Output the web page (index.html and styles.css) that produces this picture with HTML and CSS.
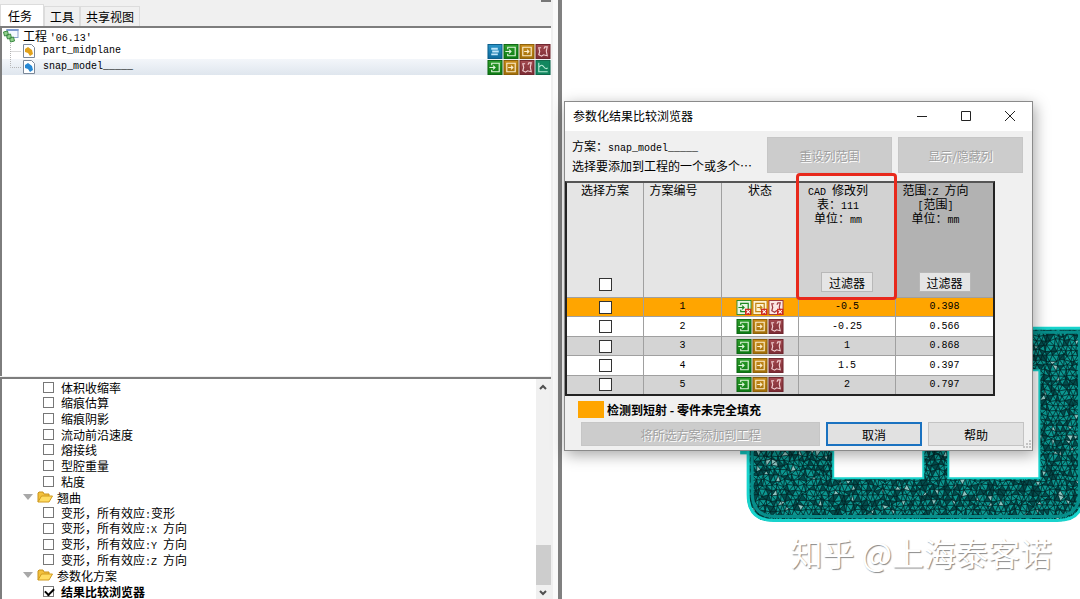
FILE: index.html
```html
<!DOCTYPE html>
<html lang="zh-CN">
<head>
    <meta charset="UTF-8">
    <meta name="viewport" content="width=device-width, initial-scale=1.0">
    <title>参数化结果比较浏览器</title>
    <link rel="stylesheet" href="styles.css">
</head>
<body>
    <!-- 图标定义 -->
    <svg class="defs" aria-hidden="true">
        <defs>
            <linearGradient id="gGreen" x2="0" y2="1"><stop offset="0" stop-color="#2f9e2c"/><stop offset="1" stop-color="#0c7a12"/></linearGradient>
            <linearGradient id="gGold" x2="0" y2="1"><stop offset="0" stop-color="#c98d1c"/><stop offset="1" stop-color="#a06e08"/></linearGradient>
            <linearGradient id="gRed" x2="0" y2="1"><stop offset="0" stop-color="#a34a50"/><stop offset="1" stop-color="#7c2c34"/></linearGradient>
            <linearGradient id="gBlue" x2="0" y2="1"><stop offset="0" stop-color="#2b95c8"/><stop offset="1" stop-color="#0b6a9c"/></linearGradient>
        </defs>
        <symbol id="fill" viewBox="0 0 16 16">
            <rect x=".5" y=".5" width="15" height="15" fill="url(#gGreen)" stroke="#0a6410"/>
            <path d="M4.500 5.500V3.500h8v9h-8v-2M2 8h6M6 6l2 2-2 2" fill="none" stroke="#dff5dc" stroke-width="1.200"/>
        </symbol>
        <symbol id="pack" viewBox="0 0 16 16">
            <rect x=".5" y=".5" width="15" height="15" fill="url(#gGold)" stroke="#8a5c05"/>
            <path d="M3.500 3.500h9v9h-9zM5 8h5M8 6l2 2-2 2" fill="none" stroke="#fdeecb" stroke-width="1.200"/>
        </symbol>
        <symbol id="warp" viewBox="0 0 16 16">
            <rect x=".5" y=".5" width="15" height="15" fill="url(#gRed)" stroke="#6d222b"/>
            <path d="M6 4H3.500l1 4-1 3.500 3 1.500 2-1.500 4 1-1-5 1-4.500H10L9 5" fill="none" stroke="#f1cfd2" stroke-width="1.200"/>
        </symbol>
        <symbol id="mesh" viewBox="0 0 16 16">
            <rect x=".5" y=".5" width="15" height="15" fill="url(#gBlue)" stroke="#075a86"/>
            <path d="M4 4h7v2H4zM5 7h7v2H5zM4 10h7v2H4z" fill="#bfe6fa"/>
        </symbol>
        <symbol id="curve" viewBox="0 0 16 16">
            <rect x=".5" y=".5" width="15" height="15" fill="#12875f" stroke="#0a6647"/>
            <path d="M3.500 3v9.500H13M4 7.500c2-3 3.500-2 5 0s3 2 4 1" fill="none" stroke="#b6ead5" stroke-width="1.200"/>
        </symbol>
        <symbol id="err" viewBox="0 0 8 8">
            <rect width="8" height="8" fill="#cf2a20"/>
            <path d="M2 2l4 4M6 2L2 6" stroke="#fff" stroke-width="1.300"/>
        </symbol>
        <symbol id="fillErr" viewBox="0 0 16 16">
            <rect x=".5" y=".5" width="15" height="15" fill="#e9f7e4" stroke="#2b8a2b"/>
            <path d="M4.500 5.500V3.500h8v9h-8v-2M2 8h6M6 6l2 2-2 2" fill="none" stroke="#1f8a22" stroke-width="1.300"/>
            <use href="#err" x="9" y="9" width="7" height="7"/>
        </symbol>
        <symbol id="packErr" viewBox="0 0 16 16">
            <rect x=".5" y=".5" width="15" height="15" fill="#fff2d2" stroke="#b57a10"/>
            <path d="M3.500 3.500h9v9h-9zM5 8h5M8 6l2 2-2 2" fill="none" stroke="#c08414" stroke-width="1.300"/>
            <use href="#err" x="9" y="9" width="7" height="7"/>
        </symbol>
        <symbol id="warpErr" viewBox="0 0 16 16">
            <rect x=".5" y=".5" width="15" height="15" fill="#fbe6e4" stroke="#97343b"/>
            <path d="M6 4H3.500l1 4-1 3.500 3 1.500 2-1.500 4 1-1-5 1-4.500H10L9 5" fill="none" stroke="#a03c44" stroke-width="1.300"/>
            <use href="#err" x="9" y="9" width="7" height="7"/>
        </symbol>
        <symbol id="folder" viewBox="0 0 16 12">
            <path d="M1 11V2l1-1h4l1 2h5v2" fill="#f3c13c" stroke="#c8921c"/>
            <path d="M1 11l3.500-6H15.500L12 11z" fill="#ffdc62" stroke="#d09a1e"/>
        </symbol>
    </svg>

    <div class="workspace">
        <div class="side">
            <div class="tabs">
                <button class="tab active">任务</button>
                <button class="tab">工具</button>
                <button class="tab">共享视图</button>
                <span class="grip"></span>
            </div>

            <div class="project">
                <div class="row root">
                    <svg class="root-icon" viewBox="0 0 16 15">
                        <rect x="4.500" y="1.500" width="11" height="8" fill="#f4f8ff" stroke="#8ba3cc"/>
                        <path d="M4 1h12v2H4z" fill="#7f9bd0"/>
                        <path d="M1 4l4-1 1 4-4 1zM4 7l4-1 1 4-4 1zM7 10l4-1 1 4-4 1z" fill="#8fd08a" stroke="#3d8a45"/>
                    </svg>
                    <span>工程 <span class="mono">'06.13'</span></span>
                </div>
                <div class="row study">
                    <svg class="branch" viewBox="0 0 14 16"><path d="M2.500 0v16M2.500 8.500H13" fill="none" stroke="#b4b4b4" stroke-dasharray="1 1"/></svg>
                    <svg class="doc" viewBox="0 0 12 14"><path d="M.5.5h8l3 3v10H.5z" fill="#fff" stroke="#7a8798"/><path d="M2 5l3-2 4 3 1 4-3 2-2-3-3-1z" fill="#e2a21b"/></svg>
                    <span class="mono">part_midplane</span>
                    <span class="status">
                        <svg><use href="#mesh"/></svg><svg><use href="#fill"/></svg><svg><use href="#pack"/></svg><svg><use href="#warp"/></svg>
                    </span>
                </div>
                <div class="row study selected">
                    <svg class="branch" viewBox="0 0 14 16"><path d="M2.500 0v8.500H13" fill="none" stroke="#b4b4b4" stroke-dasharray="1 1"/></svg>
                    <svg class="doc" viewBox="0 0 12 14"><path d="M.5.5h8l3 3v10H.5z" fill="#fff" stroke="#7a8798"/><path d="M2 5l3-2 4 3 1 4-3 2-2-3-3-1z" fill="#2688d4"/></svg>
                    <span class="mono">snap_model_____</span>
                    <span class="status">
                        <svg><use href="#fill"/></svg><svg><use href="#pack"/></svg><svg><use href="#warp"/></svg><svg><use href="#curve"/></svg>
                    </span>
                </div>
            </div>

            <div class="results">
                <div class="result-list">
                    <label class="item"><input type="checkbox">体积收缩率</label>
                    <label class="item"><input type="checkbox">缩痕估算</label>
                    <label class="item"><input type="checkbox">缩痕阴影</label>
                    <label class="item"><input type="checkbox">流动前沿速度</label>
                    <label class="item"><input type="checkbox">熔接线</label>
                    <label class="item"><input type="checkbox">型腔重量</label>
                    <label class="item"><input type="checkbox">粘度</label>
                    <div class="group"><span class="arrow"></span><svg><use href="#folder"/></svg>翘曲</div>
                    <label class="item"><input type="checkbox"><span>变形，所有效应<span class="mono">:</span>变形</span></label>
                    <label class="item"><input type="checkbox"><span>变形，所有效应<span class="mono">:X </span>方向</span></label>
                    <label class="item"><input type="checkbox"><span>变形，所有效应<span class="mono">:Y </span>方向</span></label>
                    <label class="item"><input type="checkbox"><span>变形，所有效应<span class="mono">:Z </span>方向</span></label>
                    <div class="group"><span class="arrow"></span><svg><use href="#folder"/></svg>参数化方案</div>
                    <label class="item bold"><input type="checkbox" checked>结果比较浏览器</label>
                </div>
                <div class="scrollbar">
                    <svg viewBox="0 0 8 6"><path d="M1 5l3-3 3 3" fill="none" stroke="#505050" stroke-width="2"/></svg>
                    <span class="thumb"></span>
                    <svg viewBox="0 0 8 6"><path d="M1 1l3 3 3-3" fill="none" stroke="#505050" stroke-width="2"/></svg>
                </div>
            </div>
        </div>

        <div class="viewport">
            <svg class="model" viewBox="0 0 518 599" preserveAspectRatio="xMinYMin meet">
                <defs>
                    <clipPath id="body">
                        <path clip-rule="evenodd" d="M185 327H522V494q0 27-27 27H211q-26 0-26-27zM271 370V478H361V370zM386 370V478H477V370z"/>
                    </clipPath>
                </defs>
                <g clip-path="url(#body)">
                    <rect x="180" y="320" width="345" height="205" fill="#0c9790"/>
                    <path id="light" fill="#8fc4c0"/>
                    <path id="dark" fill="#034c4c"/>
                    <path id="edges" fill="none" stroke="#042628" stroke-width="0.500"/>
                </g>
                <path d="M178 452h8" stroke="#10c4be" stroke-width="4"/>
                <path d="M186 328H521V494q0 26-26 26H211q-25 0-25-26z" fill="none" stroke="#18d3cc" stroke-width="3"/>
                <path d="M190 332H517V492q0 24-24 24H213q-23 0-23-24z" fill="none" stroke="#078e8b" stroke-width="3"/>
                <path d="M271 370V478H361V370zM386 370V478H477V370z" fill="none" stroke="#18d3cc" stroke-width="2"/>
            </svg>
            <p class="watermark">知乎 @上海泰客诺</p>
        </div>
    </div>

    <div class="dialog">
        <div class="titlebar">
            <span class="title">参数化结果比较浏览器</span>
            <button aria-label="最小化"><svg viewBox="0 0 12 12"><path d="M1 6.500h10"/></svg></button>
            <button aria-label="最大化"><svg viewBox="0 0 12 12"><path d="M1.500 1.500h9v9h-9z"/></svg></button>
            <button aria-label="关闭"><svg viewBox="0 0 12 12"><path d="M1 1l10 10M11 1L1 11"/></svg></button>
        </div>

        <div class="toolbar">
            <div class="info">
                <p>方案：<span class="mono">snap_model_____</span></p>
                <p>选择要添加到工程的一个或多个⋯</p>
            </div>
            <button class="btn" disabled>重设列范围</button>
            <button class="btn" disabled>显示/隐藏列</button>
        </div>

        <table class="grid">
            <colgroup><col class="c1"><col class="c2"><col class="c3"><col class="c4"><col class="c5"></colgroup>
            <thead>
                <tr>
                    <th><div class="head centered">选择方案<input type="checkbox" aria-label="全选"></div></th>
                    <th><div class="head">方案编号</div></th>
                    <th><div class="head centered">状态</div></th>
                    <th class="col-cad"><div class="head"><span><span class="mono">CAD </span>修改列<br>表：<span class="mono">111</span><br>单位：<span class="mono">mm</span></span></div><button class="filter">过滤器</button></th>
                    <th class="col-range"><div class="head"><span>范围<span class="mono">:Z </span>方向<br><span class="mono">[</span>范围<span class="mono">]</span><br>单位：<span class="mono">mm</span></span></div><button class="filter">过滤器</button></th>
                </tr>
            </thead>
            <tbody>
                <tr class="short">
                    <td><input type="checkbox" aria-label="方案 1"></td><td>1</td>
                    <td><span class="status"><svg><use href="#fillErr"/></svg><svg><use href="#packErr"/></svg><svg><use href="#warpErr"/></svg></span></td>
                    <td>-0.5</td><td>0.398</td>
                </tr>
                <tr>
                    <td><input type="checkbox" aria-label="方案 2"></td><td>2</td>
                    <td><span class="status"><svg><use href="#fill"/></svg><svg><use href="#pack"/></svg><svg><use href="#warp"/></svg></span></td>
                    <td>-0.25</td><td>0.566</td>
                </tr>
                <tr>
                    <td><input type="checkbox" aria-label="方案 3"></td><td>3</td>
                    <td><span class="status"><svg><use href="#fill"/></svg><svg><use href="#pack"/></svg><svg><use href="#warp"/></svg></span></td>
                    <td>1</td><td>0.868</td>
                </tr>
                <tr>
                    <td><input type="checkbox" aria-label="方案 4"></td><td>4</td>
                    <td><span class="status"><svg><use href="#fill"/></svg><svg><use href="#pack"/></svg><svg><use href="#warp"/></svg></span></td>
                    <td>1.5</td><td>0.397</td>
                </tr>
                <tr>
                    <td><input type="checkbox" aria-label="方案 5"></td><td>5</td>
                    <td><span class="status"><svg><use href="#fill"/></svg><svg><use href="#pack"/></svg><svg><use href="#warp"/></svg></span></td>
                    <td>2</td><td>0.797</td>
                </tr>
            </tbody>
        </table>

        <div class="legend"><span class="swatch"></span>检测到短射 - 零件未完全填充</div>

        <div class="actions">
            <button class="btn wide" disabled>将所选方案添加到工程</button>
            <button class="btn primary">取消</button>
            <button class="btn">帮助</button>
        </div>

        <svg class="resize" viewBox="0 0 8 8"><path d="M6 0h2v2H6zM3 3h2v2H3zM6 3h2v2H6zM0 6h2v2H0zM3 6h2v2H3zM6 6h2v2H6z" fill="#c4c4c4"/></svg>
        <div class="highlight"></div>
    </div>

    <script>
        // 生成三角形网格
        let seed = 7;
        function rand() {
            seed = (seed * 16807) % 2147483647;
            return seed / 2147483647;
        }

        const step = 5;
        const points = [];
        for (let r = 0; r < 43; r++) {
            points.push([]);
            for (let c = 0; c < 72; c++) {
                const x = 178 + c * step + (r % 2) * 2.5 + (rand() - 0.5) * 3;
                const y = 320 + r * step + (rand() - 0.5) * 3;
                points[r].push(x.toFixed(1) + ' ' + y.toFixed(1));
            }
        }

        let edges = '', light = '', dark = '';
        function addTriangle(a, b, c) {
            const d = 'M' + a + 'L' + b + 'L' + c + 'Z';
            const n = rand();
            edges += d;
            if (n < 0.04) light += d;
            else if (n < 0.3) dark += d;
        }

        for (let r = 0; r < 42; r++) {
            for (let c = 0; c < 71; c++) {
                const a = points[r][c], b = points[r][c + 1];
                const d = points[r + 1][c], e = points[r + 1][c + 1];
                if (r % 2) {
                    addTriangle(a, b, e);
                    addTriangle(a, e, d);
                } else {
                    addTriangle(a, b, d);
                    addTriangle(b, e, d);
                }
            }
        }
        document.getElementById('edges').setAttribute('d', edges);
        document.getElementById('light').setAttribute('d', light);
        document.getElementById('dark').setAttribute('d', dark);
    </script>
</body>
</html>
```
FILE: styles.css
```css
:root {
    --face: #f0f0f0;
    --line: #7d7d7d;
    --short-shot: #ffa500;
}

* {
    box-sizing: border-box;
}

body {
    margin: 0;
    height: 100vh;
    overflow: hidden;
    position: relative;
    background: #fff;
    color: #000;
    font-family: "Noto Sans CJK SC", sans-serif;
    font-size: 12px;
    line-height: 16px;
}

p {
    margin: 0;
}

button {
    font-family: inherit;
    font-size: 12px;
    color: inherit;
    padding: 0;
}

.mono {
    font-family: "Liberation Mono", monospace;
    font-size: 10px;
    line-height: 1;
    white-space: pre;
}

.defs {
    position: absolute;
    width: 0;
    height: 0;
}

input[type="checkbox"] {
    appearance: none;
    width: 13px;
    height: 13px;
    margin: 0;
    flex: none;
    background: #fff;
    border: 1px solid #333;
}

.workspace {
    display: grid;
    grid-template-columns: 52% 1fr;
    height: 100%;
}

/* 左侧面板 */
.side {
    display: flex;
    flex-direction: column;
    min-height: 0;
    background: var(--face);
    padding-right: 7px;
    border-right: 4px solid #808080;
    box-shadow: inset -5px 0 #fafafa;
}

.tabs {
    display: flex;
    align-items: flex-end;
    height: 26px;
}

.tab {
    height: 20px;
    padding: 0 5px;
    border: 1px solid #dcdcdc;
    border-bottom: 0;
    background: var(--face);
}

.tab.active {
    height: 22px;
    padding: 0 11px 0 7px;
    background: #fff;
}

.grip {
    width: 10px;
    height: 2px;
    margin-left: auto;
    align-self: flex-start;
    background: #777;
}

.project {
    flex: 1;
    background: #fff;
    border-top: 2px solid var(--line);
    border-left: 2px solid var(--line);
}

.row {
    display: flex;
    align-items: center;
    height: 16px;
}

.root {
    height: 15px;
    gap: 4px;
}

.root-icon {
    width: 17px;
    height: 15px;
}

.study {
    padding-left: 6px;
}

.selected {
    background: linear-gradient(#f3f6fa, #dfe6ee);
}

.branch {
    width: 14px;
    height: 16px;
}

.doc {
    width: 12px;
    height: 14px;
    margin: 0 8px 0 1px;
}

.status {
    display: inline-flex;
}

.status svg {
    width: 16px;
    height: 15px;
}

.row .status {
    margin-left: auto;
}

.results {
    flex: 0 0 37%;
    display: flex;
    min-height: 0;
    background: #fff;
    border-top: 2px solid var(--line);
    border-left: 2px solid var(--line);
    margin-top: 1px;
}

.result-list {
    flex: 1;
    display: grid;
    grid-auto-rows: 1fr;
}

.item,
.group {
    display: flex;
    align-items: center;
    min-height: 0;
    line-height: 15px;
}

.item {
    padding-left: 41px;
}

.item input[type="checkbox"] {
    width: 11px;
    height: 11px;
    margin-right: 7px;
    border-color: #777;
}

.item input[type="checkbox"]:checked::before {
    content: "";
    display: block;
    width: 7px;
    height: 4px;
    margin: 1px;
    border: solid #000;
    border-width: 0 0 2px 2px;
    transform: rotate(-45deg);
}

.bold {
    font-weight: bold;
}

.group {
    padding-left: 21px;
}

.group svg {
    width: 16px;
    height: 12px;
    margin: 0 4px;
}

.arrow {
    border: 5px solid transparent;
    border-top: 6px solid #a8a8a8;
    border-bottom: 0;
}

.scrollbar {
    display: flex;
    flex-direction: column;
    align-items: center;
    width: 15px;
    padding: 5px 0 3px;
    background: #f0f0f0;
}

.scrollbar svg {
    width: 8px;
    height: 6px;
}

.thumb {
    width: 100%;
    height: 19%;
    margin: auto 0 5px;
    background: #cdcdcd;
}

/* 模型视图 */
.viewport {
    position: relative;
    overflow: hidden;
    background: #fff;
}

.model {
    display: block;
    width: 100%;
}

.watermark {
    position: absolute;
    right: 28px;
    bottom: 27px;
    font-size: 32px;
    line-height: 40px;
    color: #fff;
    text-shadow: 1px 1px 1px #8a8a8a;
}

/* 对话框 */
.dialog {
    position: absolute;
    left: 564px;
    top: 101px;
    width: 469px;
    background: var(--face);
    border: 1px solid #8a8a8a;
    box-shadow: 2px 4px 14px rgba(0, 0, 0, 0.35);
}

.titlebar {
    display: flex;
    align-items: center;
    height: 29px;
    padding: 0 0 2px 8px;
    background: #fff;
}

.title {
    flex: 1;
}

.titlebar button {
    width: 44px;
    height: 26px;
    border: 0;
    background: none;
}

.titlebar svg {
    display: block;
    width: 12px;
    height: 12px;
    margin: 0 auto;
    fill: none;
    stroke: #222;
}

.toolbar {
    display: flex;
    gap: 6px;
    padding: 6px 9px 4px 7px;
}

.info {
    flex: 1;
    line-height: 18px;
    white-space: nowrap;
}

.info p {
    height: 20px;
}

.btn {
    width: 96px;
    height: 24px;
    background: #e1e1e1;
    border: 1px solid #c3c3c3;
}

.btn:disabled {
    background: #cccccc;
    border-color: #c6c6c6;
    color: #a0a0a0;
    text-shadow: 1px 1px 0 #fff;
}

.toolbar .btn {
    width: 125px;
    height: 36px;
}

.grid {
    width: 430px;
    height: 215px;
    table-layout: fixed;
    border-collapse: separate;
    border-spacing: 0;
    border: 2px solid #222;
    border-top-color: #555;
}

.c1 { width: 77px; }
.c2 { width: 78px; }
.c3 { width: 77px; }
.c4 { width: 97px; }

.grid th,
.grid td {
    padding: 0;
    text-align: center;
    border-right: 1px solid #a0a0a0;
    border-bottom: 1px solid #a0a0a0;
}

.grid th:last-child,
.grid td:last-child {
    border-right: 0;
}

.grid tr:last-child td {
    border-bottom: 0;
}

.grid th {
    height: 115px;
    vertical-align: top;
    font-weight: normal;
    line-height: 12px;
    background: #e5e5e5;
}

.head {
    display: flex;
    flex-direction: column;
    align-items: center;
    justify-content: space-between;
    height: 108px;
    padding: 1px 18px 0 0;
    white-space: nowrap;
}

.head.centered {
    padding-right: 0;
}

.grid .col-cad {
    background: #d2d2d2;
}

.grid .col-range {
    background: #b2b2b2;
}

.col-cad .head,
.col-range .head {
    height: 89px;
}

.filter {
    width: 52px;
    height: 20px;
    background: #e5e5e5;
    border: 1px solid #b8b8b8;
}

.grid td {
    background: #fff;
    line-height: 12px;
    font-family: "Liberation Mono", monospace;
    font-size: 10px;
}

.grid tr:nth-child(odd) td {
    background: #d4d4d4;
}

.grid tr.short td {
    background: var(--short-shot);
}

.grid td input,
.grid td .status {
    display: flex;
    justify-content: center;
    margin: 0 auto;
}

.legend {
    display: flex;
    align-items: center;
    gap: 3px;
    padding: 5px 0 4px 13px;
    font-weight: bold;
}

.swatch {
    width: 26px;
    height: 17px;
    background: var(--short-shot);
}

.actions {
    display: flex;
    gap: 6px;
    padding: 0 8px 4px 16px;
}

.wide {
    flex: 1;
}

.primary {
    border: 2px solid #1a72c0;
}

.resize {
    position: absolute;
    right: 1px;
    bottom: 2px;
    width: 8px;
    height: 8px;
}

.highlight {
    position: absolute;
    left: 231px;
    top: 71px;
    width: 101px;
    height: 127px;
    border: 3px solid #e8291c;
    border-radius: 4px;
}
```
